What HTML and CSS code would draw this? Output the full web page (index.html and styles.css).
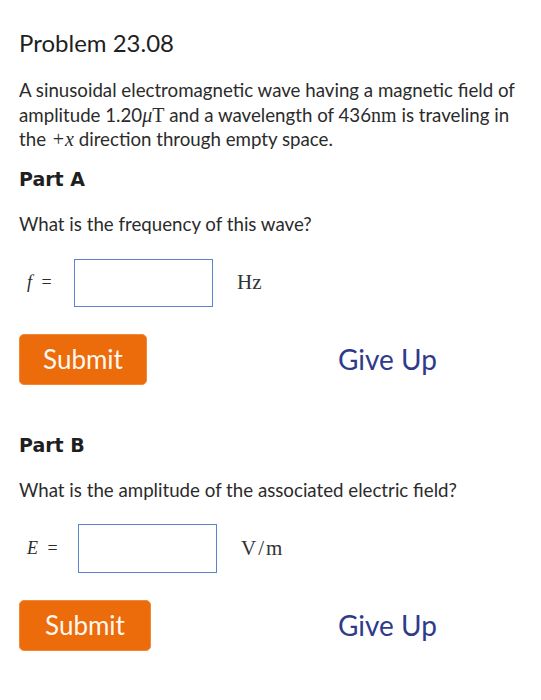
FILE: index.html
```html
<!DOCTYPE html>
<html>
<head>
<meta charset="utf-8">
<link rel="stylesheet" href="styles.css">
</head>
<body>
<div class="page">
  <h1 class="title">Problem 23.08</h1>
  <p class="intro">A sinusoidal electromagnetic wave having a magnetic field of amplitude 1.20<span class="m"><i>μ</i>T</span> and a wavelength of 436<span class="m">nm</span> is traveling in the <span class="m"><span class="plus">+</span><i>x</i></span> direction through empty space.</p>

  <section class="part">
    <h2 class="part-title">Part A</h2>
    <p class="question">What is the frequency of this wave?</p>
    <div class="answer-row">
      <span class="var"><i>f</i> =</span>
      <span class="box"></span>
      <span class="unit">Hz</span>
    </div>
    <div class="actions">
      <button class="submit">Submit</button>
      <span class="giveup">Give Up</span>
    </div>
  </section>

  <section class="part part-b">
    <h2 class="part-title">Part B</h2>
    <p class="question">What is the amplitude of the associated electric field?</p>
    <div class="answer-row">
      <span class="var"><i>E</i> =</span>
      <span class="box box-b"></span>
      <span class="unit">V<span class="slash">/</span>m</span>
    </div>
    <div class="actions">
      <button class="submit submit-b">Submit</button>
      <span class="giveup">Give Up</span>
    </div>
  </section>
</div>
</body>
</html>
```
FILE: styles.css
```css
html, body {
  margin: 0;
  padding: 0;
  background: #ffffff;
}
.page {
  padding: 26px 0 0 19px;
  font-family: Lato, "Open Sans", sans-serif;
  color: #2b2b2b;
}
.title {
  margin: 0;
  font-size: 24px;
  font-weight: 400;
  line-height: 34px;
  color: #1f1f1f;
}
.intro {
  margin: 18px 0 0 0;
  font-size: 18.7px;
  line-height: 24.5px;
  width: 510px;
}
.m {
  font-family: "Liberation Serif", "DejaVu Serif", serif;
  font-size: 20px;
  line-height: 1;
}
.plus {
  margin: 0 1px 0 2px;
}
.part-title {
  margin: 15px 0 0 0;
  font-family: "DejaVu Sans", Lato, sans-serif;
  font-size: 19px;
  font-weight: 700;
  line-height: 24px;
  color: #1f1f1f;
}
.question {
  margin: 21px 0 0 0;
  font-size: 18.7px;
  line-height: 24px;
}
.answer-row {
  display: flex;
  align-items: center;
  margin-top: 23px;
  height: 48px;
}
.var {
  font-family: "Liberation Serif", "DejaVu Serif", serif;
  font-size: 18px;
  width: 55px;
  padding-left: 8px;
  box-sizing: border-box;
}
.var i {
  margin-right: 5px;
}
.box {
  width: 139px;
  height: 48px;
  border: 1.5px solid #5b84cf;
  box-sizing: border-box;
}
.box-b {
  margin-left: 4px;
  width: 139px;
  height: 49px;
}
.unit {
  font-family: "Liberation Serif", "DejaVu Serif", serif;
  font-size: 21px;
  margin-left: 24px;
  color: #333;
}
.slash {
  margin: 0 2px;
}
.actions {
  display: flex;
  align-items: center;
  margin-top: 27px;
}
.submit {
  width: 128px;
  height: 51px;
  background: #ec6b0b;
  border: 1px solid #f08a3a;
  border-radius: 5px;
  color: #fff8f0;
  font-family: Lato, "Open Sans", sans-serif;
  font-size: 26px;
  padding: 0;
}
.submit-b {
  width: 132px;
}
.giveup {
  margin-left: 191px;
  color: #2f3b8a;
  font-size: 28px;
}
.submit-b + .giveup {
  margin-left: 187px;
}
.part-b .part-title {
  margin-top: 48px;
}
```
